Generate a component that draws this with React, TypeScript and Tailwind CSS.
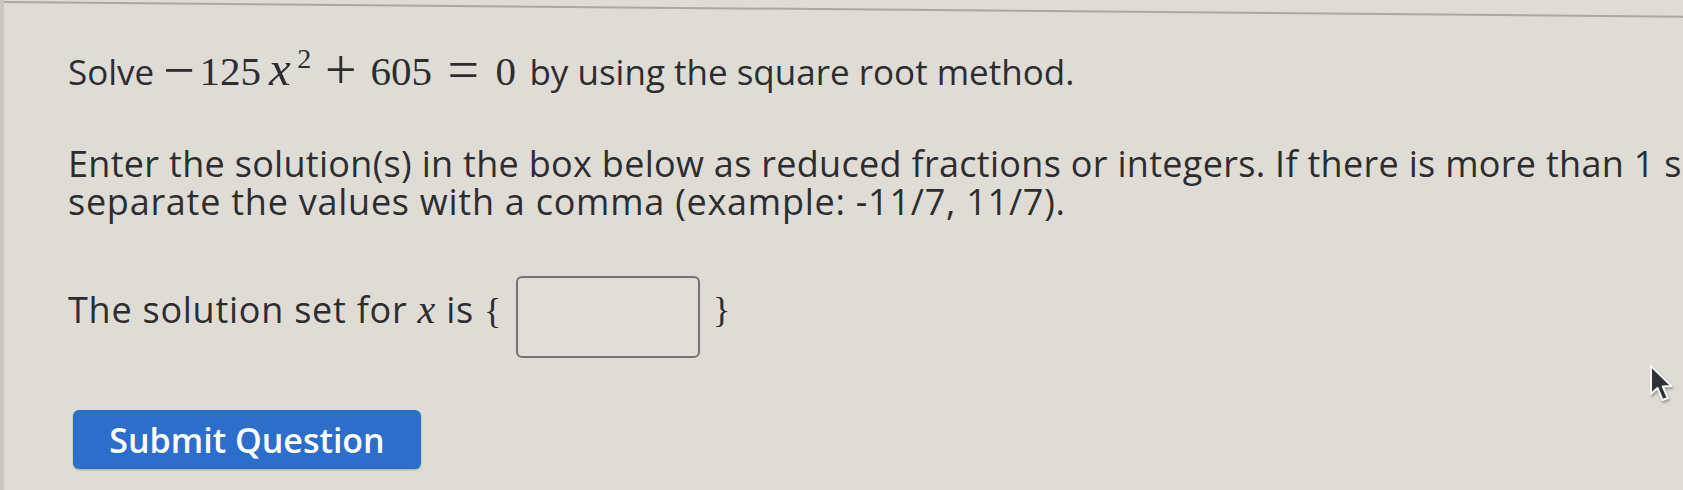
import React from 'react';

const sans = "font-['Open_Sans','Noto_Sans',sans-serif]";
const math = "font-['Liberation_Serif','DejaVu_Serif',serif] font-normal";

function Cursor() {
  return (
    <svg width="30" height="44" viewBox="0 0 30 44" className="absolute left-[1643px] top-[363px] drop-shadow-[1px_2px_1px_rgba(0,0,0,0.3)]">
      <path d="M4 3 L4 31 L10.5 25 L15.5 37 L20.8 35 L15.8 23.5 L24.5 23 Z" fill="#2f3338" stroke="#f5f5f5" strokeWidth="2" strokeLinejoin="round" />
    </svg>
  );
}

// one token of the typeset equation, in a fixed-width box like MathJax spacing
function Tok({ w, children, className = '' }: { w: string; children: React.ReactNode; className?: string }) {
  return <span className={`inline-block text-center leading-[0] ${w} ${className}`}>{children}</span>;
}

export default function App() {
  return (
    <div className="relative flex flex-col w-[1683px] h-[490px] overflow-hidden bg-[#dedcd5] border-l-4 border-[#c9c7c2] text-[#2d2d31]">
      {/* edge of the monitor, slightly tilted in the photo */}
      <div className="h-[2px] w-[1700px] mt-[1px] bg-[#a9a8a4] origin-left rotate-[0.5deg] shrink-0" />

      <div className={`pl-[64px] pt-[48px] ${sans} font-medium`}>
        <p className="whitespace-nowrap leading-[40px] text-[35px]">
          Solve{' '}
          <span className={`${math} text-[41px]`}>
            <Tok w="w-[35px]" className="text-[56px] relative top-[4px] text-left">−</Tok>
            <Tok w="w-[64px]">125</Tok>
            <Tok w="w-[35px]" className="text-[49px]">
              <i>x</i>
            </Tok>
            <Tok w="w-[17px]" className="text-[28px] relative -top-[17px] text-left">2</Tok>
            <Tok w="w-[53px]" className="text-[56px] relative top-[4px]">+</Tok>
            <Tok w="w-[68px]">605</Tok>
            <Tok w="w-[56px]" className="text-[56px] relative top-[4px]">=</Tok>
            <Tok w="w-[29px]">0</Tok>
          </span>{' '}
          by using the square root method.
        </p>

        <div className="mt-[53px] leading-[38px] text-[36px]">
          <p className="whitespace-nowrap tracking-[0.3px]">
            Enter the solution(s) in the box below as reduced fractions or integers. If there is more than 1 solution,
          </p>
          <p className="whitespace-nowrap tracking-[0.75px]">separate the values with a comma (example: -11/7, 11/7).</p>
        </div>

        <div className="mt-[55px] flex items-start gap-[13px] whitespace-nowrap text-[36px] tracking-[0.75px]">
          <span className="mt-[14px] leading-[40px]">
            The solution set for <i className={`${math} text-[40px]`}>x</i> is{' '}
            <span className={math}>{'{'}</span>
          </span>
          <div className="ml-px w-[184px] h-[82px] rounded-[6px] border-2 border-[#737373] bg-[#e0ded8]" />
          <span className={`${math} mt-[14px] leading-[40px]`}>{'}'}</span>
        </div>

        <button className="mt-[52px] ml-[5px] w-[348px] h-[59px] rounded-[6px] bg-[#2d6ecb] text-white text-[34px] font-semibold leading-none shadow-[0_1px_2px_rgba(0,0,0,0.25)]">
          Submit Question
        </button>
      </div>

      <Cursor />
    </div>
  );
}
